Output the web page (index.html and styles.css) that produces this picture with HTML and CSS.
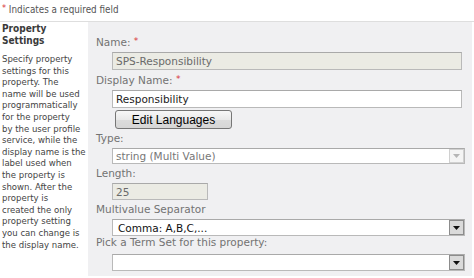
FILE: index.html
```html
<!DOCTYPE html>
<html lang="en">
<head>
    <meta charset="UTF-8">
    <title>Property Settings</title>
    <link rel="stylesheet" href="styles.css">
</head>
<body>

<div class="required"><span class="star">*</span> Indicates a required field</div>

<div class="section">
    <div class="section-desc">
        <h3>Property Settings</h3>
        <p>Specify property<br>settings for this<br>property. The<br>name will be used<br>programmatically<br>for the property<br>by the user profile<br>service, while the<br>display name is the<br>label used when<br>the property is<br>shown. After the<br>property is<br>created the only<br>property setting<br>you can change is<br>the display name.</p>
    </div>

    <div class="section-body">
        <div class="label">Name: <span class="star">*</span></div>
        <input class="text" type="text" value="SPS-Responsibility" disabled>

        <div class="label">Display Name: <span class="star">*</span></div>
        <input class="text" type="text" value="Responsibility">

        <button class="btn" type="button">Edit Languages</button>

        <div class="label">Type:</div>
        <div class="select disabled">
            <span class="select-value">string (Multi Value)</span>
            <span class="arrow"><svg width="7" height="4" viewBox="0 0 7 4"><path d="M0 0h7L3.5 4z"/></svg></span>
        </div>

        <div class="label">Length:</div>
        <input class="text short" type="text" value="25" disabled>

        <div class="label">Multivalue Separator</div>
        <div class="select">
            <span class="select-value">Comma: A,B,C,...</span>
            <span class="arrow"><svg width="7" height="4" viewBox="0 0 7 4"><path d="M0 0h7L3.5 4z"/></svg></span>
        </div>

        <div class="label term">Pick a Term Set for this property:</div>
        <div class="select term-select">
            <span class="select-value"></span>
            <span class="arrow"><svg width="7" height="4" viewBox="0 0 7 4"><path d="M0 0h7L3.5 4z"/></svg></span>
        </div>
    </div>
</div>

</body>
</html>
```

FILE: styles.css
```css
body {
    margin: 0;
    background-color: #fff;
    font-family: "DejaVu Sans", Verdana, sans-serif;
}

.star {
    color: #d8343a;
    font-size: 9px;
    vertical-align: 2px;
}

.required {
    height: 22px;
    padding-left: 2px;
    box-sizing: border-box;
    padding-top: 2px;
    border-bottom: 1px solid #dedede;
    font-family: "DejaVu Sans Condensed", "DejaVu Sans", sans-serif;
    font-stretch: condensed;
    font-size: 9.8px;
    line-height: 12px;
    color: #555;
}

.section {
    display: flex;
    height: 254px;
}

.section-desc {
    flex: 0 0 88px;
    min-width: 0;
    overflow: hidden;
    padding: 1px 0 0 2px;
    box-sizing: border-box;
    font-family: "DejaVu Sans Condensed", "DejaVu Sans", sans-serif;
    font-stretch: condensed;
    color: #444;
}

.section-desc h3 {
    margin: 0;
    font-size: 10px;
    line-height: 12px;
    font-weight: bold;
    color: #3a3a3a;
}

.section-desc p {
    margin: 6px 0 0 0;
    font-size: 9.5px;
    line-height: 11.6px;
    white-space: nowrap;
}

.section-body {
    flex: 1;
    min-width: 0;
    margin-right: 2px;
    padding: 13px 10px 0 8px;
    background-color: #f0f0f2;
    display: flex;
    flex-direction: column;
    align-items: flex-start;
}

.label {
    margin-top: 3px;
    font-size: 10.5px;
    line-height: 13px;
    color: #737373;
}

.label:first-child {
    margin-top: 0;
}

.label.term {
    margin-top: 0;
}

.text {
    margin: 3px 0 0 16px;
    width: calc(100% - 16px);
    height: 18px;
    box-sizing: border-box;
    padding: 0 3px;
    border: 1px solid #b9b9b9;
    border-top-color: #a9a9a9;
    background-color: #fff;
    font-family: "DejaVu Sans", Verdana, sans-serif;
    font-size: 10.5px;
    color: #222;
    outline: none;
}

.text:disabled {
    background-color: #ebebe4;
    color: #6a6a6a;
}

.text.short {
    width: 96px;
    height: 17px;
}

.btn {
    margin: 2px 0 0 19px;
    width: 117px;
    height: 19px;
    padding: 0;
    border: 1px solid #767676;
    border-radius: 3px;
    background: linear-gradient(#f7f7f7, #e9e9e9 50%, #dcdcdc 51%, #d6d6d6);
    font-family: "Liberation Sans", Arial, sans-serif;
    font-size: 12px;
    color: #000;
}

.select {
    margin: 3px 0 0 16px;
    width: 353px;
    height: 17px;
    box-sizing: border-box;
    border: 1px solid #b9b9b9;
    border-top-color: #a9a9a9;
    background-color: #fff;
    display: flex;
    align-items: center;
    justify-content: space-between;
    font-size: 10.5px;
    color: #111;
}

.select-value {
    padding-left: 5px;
}

.select.disabled {
    height: 16px;
    color: #777;
}

.select.disabled .select-value {
    padding-left: 3px;
}

.term-select {
    margin-top: 5px;
}

.arrow {
    width: 15px;
    height: 100%;
    box-sizing: border-box;
    border: 1px solid #8c8c8c;
    background-color: #dadada;
    display: flex;
    align-items: center;
    justify-content: center;
}

.arrow svg {
    fill: #111;
}

.select.disabled .arrow {
    border-color: #d0d0d0;
    background-color: #f4f4f4;
}

.select.disabled .arrow svg {
    fill: #b5b5b5;
}
```
